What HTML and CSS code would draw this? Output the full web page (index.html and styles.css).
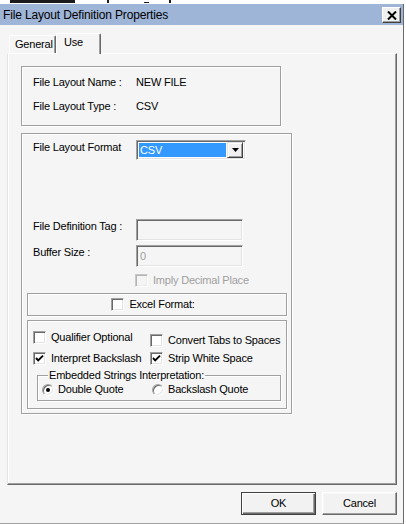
FILE: index.html
```html
<!DOCTYPE html>
<html>
<head>
<meta charset="utf-8">
<link rel="stylesheet" href="styles.css">
</head>
<body>
<div class="behind"><span class="frag f1"></span><span class="frag f2"></span><span class="frag f3"></span><span class="frag f4"></span></div>
<div class="window">
  <div class="titlebar">
    <span class="title">File Layout Definition Properties</span>
    <span class="close"><svg width="10" height="9" viewBox="0 0 10 9"><path d="M1 0.5 L9 8.5 M9 0.5 L1 8.5" stroke="#000" stroke-width="2" fill="none"/></svg></span>
  </div>
  <div class="tabs">
    <div class="tab">General</div>
    <div class="tab selected">Use</div>
  </div>
  <div class="panel">
    <div class="group info">
      <div class="row"><span class="lbl">File Layout Name :</span><span>NEW FILE</span></div>
      <div class="row"><span class="lbl">File Layout Type :</span><span>CSV</span></div>
    </div>
    <div class="group main">
      <div class="frow">
        <span class="lbl">File Layout Format</span>
        <div class="combo">
          <span class="combo-sel">CSV</span>
          <span class="combo-btn"><svg width="7" height="4" viewBox="0 0 7 4"><path d="M0 0 H7 L3.5 4 Z" fill="#000"/></svg></span>
        </div>
      </div>
      <div class="frow tagrow">
        <span class="lbl">File Definition Tag :</span>
        <div class="edit"></div>
      </div>
      <div class="frow bufrow">
        <span class="lbl">Buffer Size :</span>
        <div class="edit">0</div>
      </div>
      <div class="chk disabled imply"><span class="box"></span><span>Imply Decimal Place</span></div>
      <div class="group excel">
        <div class="chk"><span class="box"></span><span>Excel Format:</span></div>
      </div>
      <div class="group opts">
        <div class="optgrid">
          <div class="chk"><span class="box"></span><span>Qualifier Optional</span></div>
          <div class="chk lowered"><span class="box"></span><span>Convert Tabs to Spaces</span></div>
          <div class="chk"><span class="box"><svg width="9" height="9" viewBox="0 0 9 9"><path d="M1 4 L3.2 6.4 L8 1.6" stroke="#000" stroke-width="1.9" fill="none"/></svg></span><span>Interpret Backslash</span></div>
          <div class="chk"><span class="box"><svg width="9" height="9" viewBox="0 0 9 9"><path d="M1 4 L3.2 6.4 L8 1.6" stroke="#000" stroke-width="1.9" fill="none"/></svg></span><span>Strip White Space</span></div>
        </div>
        <fieldset class="embedded">
          <legend>Embedded Strings Interpretation:</legend>
          <div class="radios">
            <div class="rad"><span class="circle on"></span><span>Double Quote</span></div>
            <div class="rad"><span class="circle"></span><span>Backslash Quote</span></div>
          </div>
        </fieldset>
      </div>
    </div>
  </div>
  <div class="buttons">
    <div class="btn default">OK</div>
    <div class="btn">Cancel</div>
  </div>
</div>
</body>
</html>
```
FILE: styles.css
```css
* { box-sizing: border-box; }
html, body {
  margin: 0;
  padding: 0;
  background: #ffffff;
  font-family: "Liberation Sans", Arial, sans-serif;
  font-size: 11px;
  letter-spacing: -0.2px;
  color: #000;
}
.behind {
  height: 4px;
  display: flex;
  align-items: flex-start;
  padding-left: 10px;
}
.frag {
  height: 3px;
  background: #1a1a1a;
}
.f1 { width: 65px; }
.f2 { width: 2px; margin-left: 32px; }
.f3 { width: 5px; margin-left: 35px; height: 1px; margin-top: 2px; }
.f4 { width: 2px; margin-left: 20px; }
.window {
  width: 404px;
  height: 520px;
  background: #f5f5f5;
  border-right: 1px solid #696969;
  border-bottom: 1px solid #a0a0a0;
}
.titlebar {
  height: 21px;
  background: #9eb5d8;
  display: flex;
  align-items: center;
  justify-content: space-between;
  padding: 0 2px 0 3px;
}
.title {
  font-size: 12px;
  letter-spacing: -0.15px;
}
.close {
  width: 19px;
  height: 16px;
  background: #f0f0f0;
  border: 1px solid;
  border-color: #ffffff #404040 #404040 #ffffff;
  box-shadow: inset -1px -1px 0 #a0a0a0;
  display: flex;
  align-items: center;
  justify-content: center;
  margin-top: 1px;
}
.tabs {
  display: flex;
  align-items: flex-end;
  height: 20px;
  margin-top: 8px;
  padding-left: 9px;
}
.tab {
  height: 18px;
  width: 47px;
  padding: 2px 0 0 5px;
  line-height: 13px;
  border-top: 1px solid #ffffff;
  border-left: 1px solid #ffffff;
  border-right: 1px solid #696969;
  box-shadow: inset -1px 0 0 #a0a0a0;
  border-radius: 2px 2px 0 0;
  background: #f5f5f5;
}
.tab.selected {
  width: 45px;
  height: 21px;
  margin-bottom: -1px;
  padding: 2px 0 0 7px;
  position: relative;
  z-index: 1;
}
.panel {
  margin-left: 7px;
  width: 390px;
  height: 432px;
  border: 1px solid;
  border-color: #ffffff #696969 #696969 #e3e3e3;
  box-shadow: inset -1px -1px 0 #a0a0a0, inset 1px 0 0 #ffffff;
  padding: 12px 0 0 13px;
}
.group {
  border: 1px solid #a0a0a0;
  box-shadow: 1px 1px 0 #ffffff, inset 1px 1px 0 #ffffff;
}
.info {
  width: 260px;
  height: 60px;
  padding: 8px 0 0 11px;
  display: flex;
  flex-direction: column;
  gap: 10px;
}
.row {
  display: flex;
  line-height: 14px;
}
.lbl {
  width: 103px;
  flex: none;
  line-height: 14px;
}
.main {
  margin-top: 7px;
  width: 271px;
  height: 281px;
  padding-top: 6px;
}
.frow {
  display: flex;
  align-items: flex-start;
  margin-left: 11px;
}
.combo {
  width: 110px;
  height: 20px;
  background: #ffffff;
  border: 1px solid;
  border-color: #a0a0a0 #ffffff #ffffff #a0a0a0;
  box-shadow: inset 1px 1px 0 #696969, inset -1px -1px 0 #e3e3e3;
  display: flex;
  padding: 2px;
}
.combo-sel {
  flex: 1;
  background: #3399ff;
  color: #ffffff;
  line-height: 14px;
  padding-left: 1px;
  margin: 0 1px 0 0;
}
.combo-btn {
  width: 16px;
  flex: none;
  background: #f0f0f0;
  border: 1px solid;
  border-color: #e3e3e3 #404040 #404040 #e3e3e3;
  box-shadow: inset 1px 1px 0 #ffffff, inset -1px -1px 0 #a0a0a0;
  display: flex;
  align-items: center;
  justify-content: center;
  margin: -1px 0 -1px 0;
}
.tagrow { margin-top: 59px; }
.bufrow { margin-top: 4px; }
.edit {
  width: 107px;
  height: 22px;
  border: 1px solid;
  border-color: #a0a0a0 #ffffff #ffffff #a0a0a0;
  box-shadow: inset 1px 1px 0 #696969, inset -1px -1px 0 #e3e3e3;
  color: #a0a0a0;
  padding: 3px 0 0 3px;
  line-height: 14px;
}
.chk {
  display: flex;
  align-items: center;
  height: 13px;
  line-height: 13px;
  white-space: nowrap;
}
.box {
  width: 13px;
  height: 13px;
  flex: none;
  margin-right: 5px;
  background: #ffffff;
  border: 1px solid;
  border-color: #a0a0a0 #ffffff #ffffff #a0a0a0;
  box-shadow: inset 1px 1px 0 #696969, inset -1px -1px 0 #e3e3e3;
  display: flex;
  align-items: center;
  justify-content: center;
}
.chk.disabled { color: #a0a0a0; }
.chk.disabled .box {
  background: #f5f5f5;
  border-color: #c8c8c8 #ffffff #ffffff #c8c8c8;
  box-shadow: inset 1px 1px 0 #b4b4b4, inset -1px -1px 0 #ececec;
}
.imply {
  margin: 7px 0 0 113px;
}
.excel {
  margin: 6px 0 0 5px;
  width: 260px;
  height: 23px;
  display: flex;
  align-items: center;
  justify-content: center;
  padding-right: 8px;
}
.opts {
  margin: 4px 0 0 5px;
  width: 260px;
  height: 89px;
  padding: 10px 0 0 5px;
}
.optgrid {
  display: grid;
  grid-template-columns: 117px auto;
  row-gap: 8px;
}
.chk.lowered { margin-top: 3px; margin-bottom: -3px; }
.embedded {
  margin: 4px 0 0 4px;
  width: 244px;
  padding: 0 0 4px 4px;
  border: 1px solid #a0a0a0;
  box-shadow: 1px 1px 0 #ffffff, inset 1px 1px 0 #ffffff;
  min-inline-size: 0;
}
.embedded legend {
  padding: 0 1px;
  margin-left: 6px;
  line-height: 13px;
}
.radios {
  display: flex;
  margin-top: 1px;
  height: 13px;
}
.rad {
  display: flex;
  align-items: center;
  line-height: 13px;
  white-space: nowrap;
}
.rad:first-child { width: 110px; }
.circle {
  width: 12px;
  height: 12px;
  flex: none;
  margin-right: 4px;
  border-radius: 50%;
  background: #ffffff;
  border: 1px solid;
  border-color: #a0a0a0 #ffffff #ffffff #a0a0a0;
  box-shadow: inset 1px 1px 0 #696969, inset -1px -1px 0 #e3e3e3;
  display: flex;
  align-items: center;
  justify-content: center;
}
.circle.on::after {
  content: "";
  width: 4px;
  height: 4px;
  border-radius: 50%;
  background: #000;
}
.buttons {
  display: flex;
  justify-content: flex-end;
  gap: 6px;
  margin-top: 7px;
  padding-right: 6px;
}
.btn {
  width: 75px;
  height: 23px;
  background: #f2f2f2;
  border: 1px solid;
  border-color: #ffffff #696969 #696969 #ffffff;
  box-shadow: inset -1px -1px 0 #a0a0a0, inset 1px 1px 0 #f8f8f8;
  display: flex;
  align-items: center;
  justify-content: center;
  line-height: 13px;
}
.btn.default {
  border-color: #404040;
  box-shadow: inset 1px 1px 0 #ffffff, inset -1px -1px 0 #696969, inset -2px -2px 0 #a0a0a0;
}
```
